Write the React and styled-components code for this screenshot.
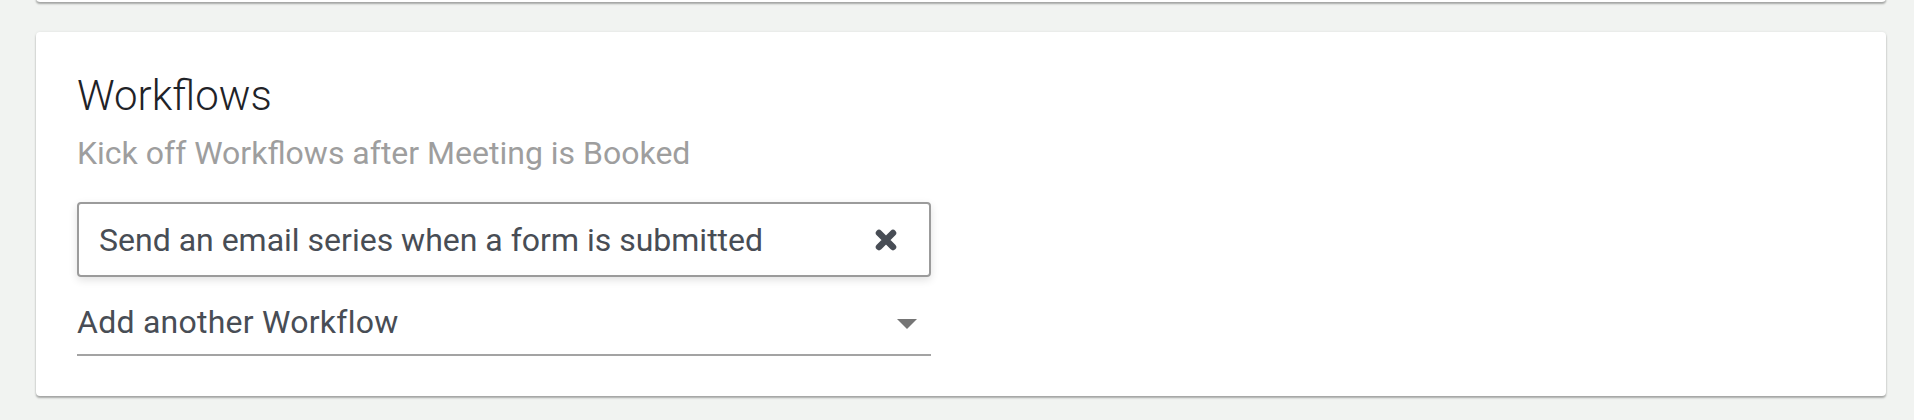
import React from 'react';
import styled, { createGlobalStyle } from 'styled-components';

const GlobalStyle = createGlobalStyle`
  html, body { margin: 0; padding: 0; background: #f1f3f1; }
  body { font-family: Roboto, "Liberation Sans", sans-serif; }
`;

const Page = styled.div`
  display: flex;
  flex-direction: column;
  gap: 30px;
  padding: 0 28px 0 36px;
  height: 420px;
  overflow: hidden;
  background: #f1f3f1;
`;

const Card = styled.section`
  background: #fff;
  border-radius: 4px;
  box-shadow: 0 2px 2px rgba(0, 0, 0, 0.3), 0 0 3px rgba(0, 0, 0, 0.08);
  padding: 40px 40px 40px 41px;
`;

// the card above, scrolled mostly out of view
const PrevCard = styled(Card)`
  height: 100px;
  margin-top: -98px;
  flex: none;
  box-sizing: border-box;
`;

const Title = styled.h2`
  margin: 0 0 13px;
  font-size: 42px;
  line-height: 48px;
  font-weight: 300;
  color: #1f2328;
`;

const Subtitle = styled.p`
  margin: 0 0 29px;
  font-size: 32px;
  line-height: 40px;
  color: #9e9e9e;
`;

const Field = styled.div`
  width: 854px;
`;

const Chip = styled.div`
  display: flex;
  align-items: center;
  justify-content: space-between;
  box-sizing: border-box;
  height: 75px;
  padding: 0 32px 0 20px;
  border: 2px solid #9b9b9b;
  border-radius: 4px;
  box-shadow: 0 3px 8px rgba(0, 0, 0, 0.12);
  font-size: 32px;
  line-height: 40px;
  color: #484d55;
`;

const RemoveBtn = styled.button`
  display: flex;
  padding: 0;
  border: 0;
  background: none;
  cursor: pointer;
`;

const Select = styled.div`
  display: flex;
  align-items: center;
  justify-content: space-between;
  margin-top: 25px;
  padding: 0 14px 12px 0;
  border-bottom: 2px solid #a3a3a3;
  font-size: 32px;
  line-height: 40px;
  letter-spacing: 0.25px;
  color: #484d55;
`;

const Caret = styled.span`
  width: 0;
  height: 0;
  margin-top: 4px;
  border-left: 10px solid transparent;
  border-right: 10px solid transparent;
  border-top: 10px solid #757575;
`;

function CloseIcon() {
  return (
    <svg width="22" height="22" viewBox="0 0 22 22">
      <path d="M4 4L18 18M18 4L4 18" stroke="#484d55" strokeWidth="6.5" strokeLinecap="round" fill="none" />
    </svg>
  );
}

export default function App() {
  return (
    <>
      <GlobalStyle />
      <Page>
        <PrevCard />
        <Card>
          <Title>Workflows</Title>
          <Subtitle>Kick off Workflows after Meeting is Booked</Subtitle>
          <Field>
            <Chip>
              <span>Send an email series when a form is submitted</span>
              <RemoveBtn aria-label="remove">
                <CloseIcon />
              </RemoveBtn>
            </Chip>
            <Select>
              <span>Add another Workflow</span>
              <Caret />
            </Select>
          </Field>
        </Card>
      </Page>
    </>
  );
}
